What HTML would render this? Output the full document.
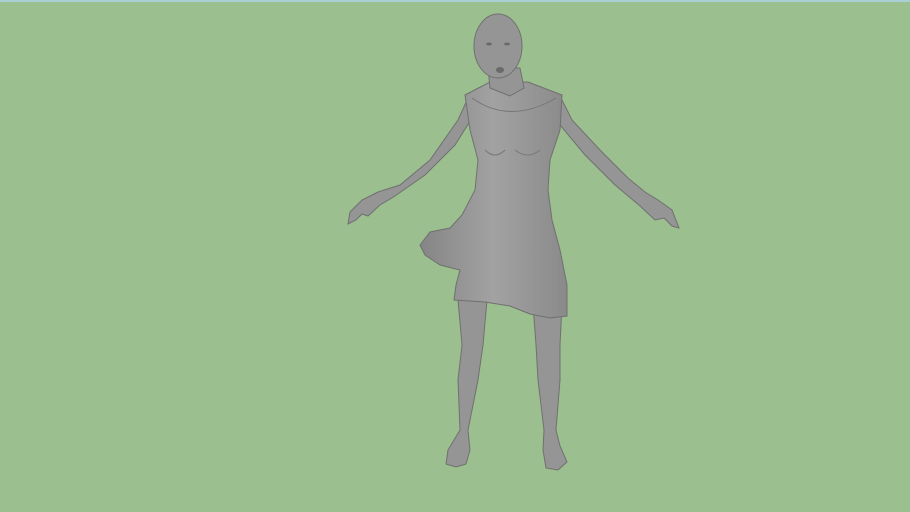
<!DOCTYPE html>
<html><head><style>
html,body{margin:0;padding:0;}
body{width:910px;height:512px;background:#9bbf8e;position:relative;overflow:hidden;}
.top{position:absolute;left:0;top:0;width:910px;height:2px;background:#a9d0d6;}
</style></head><body>
<div class="top"></div>
<svg width="910" height="512" style="position:absolute;left:0;top:0">
<defs>
<linearGradient id="g" x1="0" y1="0" x2="1" y2="0">
<stop offset="0" stop-color="#858585"/><stop offset="0.5" stop-color="#a2a2a2"/><stop offset="1" stop-color="#8a8a8a"/>
</linearGradient>
</defs>
<g fill="#959595" stroke="#707070" stroke-width="1">
<path d="M468,98 L458,120 L430,160 L400,185 L378,192 L362,200 L350,212 L348,224 L356,220 L362,214 L368,216 L380,205 L395,196 L425,175 L455,145 L472,118 Z"/>
<path d="M560,96 L572,120 L600,150 L628,178 L645,192 L658,200 L672,210 L679,228 L672,226 L664,218 L655,220 L640,206 L615,185 L585,155 L560,125 Z"/>
<path d="M458,300 L462,345 L458,380 L460,430 L448,450 L446,464 L456,467 L466,464 L470,450 L468,430 L478,380 L483,345 L487,300 Z"/>
<path d="M533,305 L536,345 L538,380 L544,430 L543,450 L546,468 L558,470 L567,462 L560,446 L556,430 L560,380 L560,345 L562,305 Z"/>
<path d="M465,95 L490,82 L528,82 L562,95 L560,130 L550,160 L548,190 L552,220 L560,250 L567,285 L567,316 L550,318 L530,314 L510,306 L485,302 L454,300 L456,285 L460,270 L440,265 L425,255 L420,245 L430,232 L450,228 L462,215 L475,190 L478,160 L470,130 Z" fill="url(#g)"/>
<path d="M488,68 L490,88 L510,96 L524,88 L520,68 Z"/>
<ellipse cx="498" cy="46" rx="24" ry="32"/>
</g>
<g fill="none" stroke="#777" stroke-width="1">
<path d="M472,98 Q510,125 556,98"/>
<path d="M485,150 Q495,160 505,150 M515,150 Q528,160 540,150"/>
</g>
<g fill="#6a6a6a">
<ellipse cx="489" cy="44" rx="3" ry="1.5"/>
<ellipse cx="507" cy="44" rx="3" ry="1.5"/>
<ellipse cx="500" cy="70" rx="4" ry="3"/>
</g>
</svg>
</body></html>
